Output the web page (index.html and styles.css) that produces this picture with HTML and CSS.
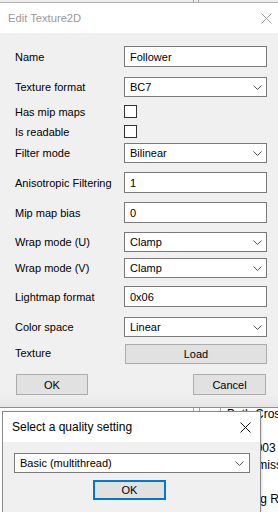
FILE: index.html
```html
<!DOCTYPE html>
<html>
<head>
<meta charset="utf-8">
<link rel="stylesheet" href="styles.css">
</head>
<body>
<div class="bg-top"><div class="cols"></div></div>

<div class="dlg1">
  <div class="dlg1-title">
    <span>Edit Texture2D</span>
    <svg class="close" width="11" height="11" viewBox="0 0 11 11"><path d="M0.5 0.5L10.5 10.5M10.5 0.5L0.5 10.5" stroke="#a0a0a0" stroke-width="1" fill="none"/></svg>
  </div>
  <div class="dlg1-body">
    <div class="form">
      <div class="lbl h21">Name</div>
      <div class="field h21">Follower</div>

      <div class="lbl h20">Texture format</div>
      <div class="field combo h20"><span>BC7</span><svg width="9" height="5" viewBox="0 0 9 5"><path d="M0.5 0.5L4.5 4.5L8.5 0.5" stroke="#555" fill="none"/></svg></div>

      <div class="lbl h13">Has mip maps</div>
      <div class="check"></div>

      <div class="lbl h13">Is readable</div>
      <div class="check"></div>

      <div class="lbl h20">Filter mode</div>
      <div class="field combo h20"><span>Bilinear</span><svg width="9" height="5" viewBox="0 0 9 5"><path d="M0.5 0.5L4.5 4.5L8.5 0.5" stroke="#555" fill="none"/></svg></div>

      <div class="lbl h21">Anisotropic Filtering</div>
      <div class="field h21">1</div>

      <div class="lbl h21">Mip map bias</div>
      <div class="field h21">0</div>

      <div class="lbl h20">Wrap mode (U)</div>
      <div class="field combo h20"><span>Clamp</span><svg width="9" height="5" viewBox="0 0 9 5"><path d="M0.5 0.5L4.5 4.5L8.5 0.5" stroke="#555" fill="none"/></svg></div>

      <div class="lbl h20">Wrap mode (V)</div>
      <div class="field combo h20"><span>Clamp</span><svg width="9" height="5" viewBox="0 0 9 5"><path d="M0.5 0.5L4.5 4.5L8.5 0.5" stroke="#555" fill="none"/></svg></div>

      <div class="lbl h21">Lightmap format</div>
      <div class="field h21">0x06</div>

      <div class="lbl h20">Color space</div>
      <div class="field combo h20"><span>Linear</span><svg width="9" height="5" viewBox="0 0 9 5"><path d="M0.5 0.5L4.5 4.5L8.5 0.5" stroke="#555" fill="none"/></svg></div>

      <div class="lbl h18">Texture</div>
      <div class="btn load">Load</div>
    </div>
    <div class="actions">
      <div class="btn ok">OK</div>
      <div class="btn cancel">Cancel</div>
    </div>
  </div>
</div>

<div class="bg-bottom">
  <div class="seps"><i class="s1"></i><i class="s2"></i><i class="s3"></i></div>
  <div class="list">
    <div class="li">Both Crossing</div>
    <div class="li"></div>
    <div class="li">No. 1003</div>
    <div class="li">Transmission</div>
    <div class="li"></div>
    <div class="li">Sealing Ring</div>
  </div>

  <div class="dlg2">
    <div class="dlg2-title">
      <span>Select a quality setting</span>
      <svg class="close2" width="11" height="11" viewBox="0 0 11 11"><path d="M0.5 0.5L10.5 10.5M10.5 0.5L0.5 10.5" stroke="#111" stroke-width="1" fill="none"/></svg>
    </div>
    <div class="dlg2-body">
      <div class="field combo h20 wide"><span>Basic (multithread)</span><svg width="9" height="5" viewBox="0 0 9 5"><path d="M0.5 0.5L4.5 4.5L8.5 0.5" stroke="#555" fill="none"/></svg></div>
      <div class="btn ok2">OK</div>
    </div>
  </div>
</div>
</body>
</html>
```

FILE: styles.css
```css
* { box-sizing: border-box; margin: 0; padding: 0; }
html, body { width: 278px; height: 512px; overflow: hidden; }
body {
  font-family: "Liberation Sans", Arial, sans-serif;
  font-size: 11px;
  color: #000;
  background: #f0f0f0;
}

.bg-top {
  height: 3px;
  background: #ededed;
  border-bottom: 1px solid #b0b0b0;
  padding-left: 193px;
}
.bg-top .cols {
  width: 6px;
  height: 2px;
  border-left: 1px solid #a0a0a0;
  border-right: 1px solid #a0a0a0;
}

.dlg1 {
  height: 404px;
  display: flex;
  flex-direction: column;
  background: #f0f0f0;
}
.dlg1-title {
  height: 30px;
  flex: none;
  background: #fff;
  color: #9a9a9a;
  font-size: 11.2px;
  display: flex;
  align-items: center;
  justify-content: space-between;
  padding: 0 6px 0 8px;
}
.dlg1-body {
  flex: 1;
  background: linear-gradient(#f0f0f0 0, #f0f0f0 360px, #e6e6e6 374px);
}

.form {
  display: grid;
  grid-template-columns: 109px 143px;
  grid-template-rows: 31px 28px 20px 18px 29px 30px 30px 26px 28px 31px 27px 30px;
  padding: 13px 0 0 15px;
  align-items: start;
}
.lbl { display: flex; align-items: center; white-space: nowrap; }
.h21 { height: 21px; }
.h20 { height: 20px; }
.h18 { height: 18px; }
.h13 { height: 13px; }

.field {
  background: #fff;
  border: 1px solid #7a7a7a;
  display: flex;
  align-items: center;
  padding: 0 5px;
  white-space: nowrap;
}
.combo { justify-content: space-between; padding-right: 4px; }
.check {
  width: 13px;
  height: 13px;
  background: #fff;
  border: 1px solid #333;
}

.btn {
  background: #e1e1e1;
  border: 1px solid #adadad;
  display: flex;
  align-items: center;
  justify-content: center;
}
.load { height: 20px; width: 142px; margin-left: 1px; }

.actions {
  display: flex;
  justify-content: space-between;
  padding: 0 12px 0 16px;
}
.ok { width: 72px; height: 21px; }
.cancel { width: 73px; height: 21px; }

.bg-bottom {
  position: relative;
  height: 105px;
  background: #fff;
  border-top: 1px solid #8e8e8e;
  overflow: hidden;
}
.seps {
  display: flex;
  height: 3px;
  padding-left: 193px;
}
.seps i { display: block; height: 3px; border-left: 1px solid #a8a8a8; }
.seps .s1 { width: 6px; }
.seps .s2 { width: 21px; }
.seps .s3 { width: 1px; }

.list {
  position: absolute;
  left: 227px;
  top: -2px;
  font-size: 12px;
  line-height: 17px;
  white-space: nowrap;
}
.li { height: 17px; }

.dlg2 {
  position: absolute;
  left: 2px;
  top: 3px;
  width: 259px;
  height: 110px;
  border: 1px solid #8a8a8a;
  border-bottom: none;
  background: #f0f0f0;
  box-shadow: 1px 0 2px rgba(0,0,0,0.15);
}
.dlg2-title {
  height: 30px;
  background: #fff;
  font-size: 12px;
  display: flex;
  align-items: center;
  justify-content: space-between;
  padding: 0 9px 0 9px;
}
.dlg2-body {
  padding: 11px 0 0 11px;
}
.wide { width: 236px; padding-right: 5px; }
.ok2 {
  width: 73px;
  height: 20px;
  margin: 7px 0 0 79px;
  border: 2px solid #0078d7;
}
```
